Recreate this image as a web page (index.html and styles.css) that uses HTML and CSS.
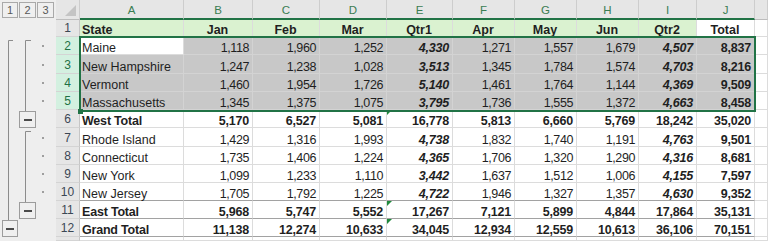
FILE: index.html
```html
<!DOCTYPE html>
<html>
<head>
<meta charset="utf-8">
<link rel="stylesheet" href="styles.css">
</head>
<body>
<div class="app">
  <div class="outline">
    <svg class="olines" width="56" height="241" viewBox="0 0 56 241">
      <path d="M13 40.5H8.5V220" />
      <path d="M31 40.5H25.5V111" />
      <path d="M31 131.5H25.5V202" />
    </svg>
    <div class="lvl r1 k1 first">1</div>
    <div class="lvl r1 k2">2</div>
    <div class="lvl r1 k3">3</div>
    <div class="dot r3 k3"></div>
    <div class="dot r4 k3"></div>
    <div class="dot r5 k3"></div>
    <div class="dot r6 k3"></div>
    <div class="mb r7 k2"><span class="dash"></span></div>
    <div class="dot r8 k3"></div>
    <div class="dot r9 k3"></div>
    <div class="dot r10 k3"></div>
    <div class="dot r11 k3"></div>
    <div class="mb r12 k2"><span class="dash"></span></div>
    <div class="mb r13 k1 first"><span class="dash"></span></div>
  </div>

  <div class="sheet">
    <div class="corner"><span class="tri"></span></div>
    <div class="ch sel">A</div><div class="ch sel">B</div><div class="ch sel">C</div><div class="ch sel">D</div><div class="ch sel">E</div><div class="ch sel">F</div><div class="ch sel">G</div><div class="ch sel">H</div><div class="ch sel">I</div><div class="ch sel">J</div><div class="ch"></div>

    <div class="rh">1</div>
    <div class="c hd l">State</div><div class="c hd">Jan</div><div class="c hd">Feb</div><div class="c hd">Mar</div><div class="c hd">Qtr1</div><div class="c hd">Apr</div><div class="c hd">May</div><div class="c hd">Jun</div><div class="c hd">Qtr2</div><div class="c hd w">Total</div><div class="c"></div>

    <div class="rh sel">2</div>
    <div class="c l act">Maine</div><div class="c n s">1,118</div><div class="c n s">1,960</div><div class="c n s">1,252</div><div class="c n s q">4,330</div><div class="c n s">1,271</div><div class="c n s">1,557</div><div class="c n s">1,679</div><div class="c n s q">4,507</div><div class="c n s b">8,837</div><div class="c"></div>

    <div class="rh sel">3</div>
    <div class="c l s">New Hampshire</div><div class="c n s">1,247</div><div class="c n s">1,238</div><div class="c n s">1,028</div><div class="c n s q">3,513</div><div class="c n s">1,345</div><div class="c n s">1,784</div><div class="c n s">1,574</div><div class="c n s q">4,703</div><div class="c n s b">8,216</div><div class="c"></div>

    <div class="rh sel">4</div>
    <div class="c l s">Vermont</div><div class="c n s">1,460</div><div class="c n s">1,954</div><div class="c n s">1,726</div><div class="c n s q">5,140</div><div class="c n s">1,461</div><div class="c n s">1,764</div><div class="c n s">1,144</div><div class="c n s q">4,369</div><div class="c n s b">9,509</div><div class="c"></div>

    <div class="rh sel">5</div>
    <div class="c l s">Massachusetts</div><div class="c n s">1,345</div><div class="c n s">1,375</div><div class="c n s">1,075</div><div class="c n s q">3,795</div><div class="c n s">1,736</div><div class="c n s">1,555</div><div class="c n s">1,372</div><div class="c n s q">4,663</div><div class="c n s b">8,458</div><div class="c"></div>

    <div class="rh">6</div>
    <div class="c l b">West Total</div><div class="c n b">5,170</div><div class="c n b">6,527</div><div class="c n b">5,081</div><div class="c n b err">16,778</div><div class="c n b">5,813</div><div class="c n b">6,660</div><div class="c n b">5,769</div><div class="c n b">18,242</div><div class="c n b">35,020</div><div class="c"></div>

    <div class="rh">7</div>
    <div class="c l">Rhode Island</div><div class="c n">1,429</div><div class="c n">1,316</div><div class="c n">1,993</div><div class="c n q">4,738</div><div class="c n">1,832</div><div class="c n">1,740</div><div class="c n">1,191</div><div class="c n q">4,763</div><div class="c n b">9,501</div><div class="c"></div>

    <div class="rh">8</div>
    <div class="c l">Connecticut</div><div class="c n">1,735</div><div class="c n">1,406</div><div class="c n">1,224</div><div class="c n q">4,365</div><div class="c n">1,706</div><div class="c n">1,320</div><div class="c n">1,290</div><div class="c n q">4,316</div><div class="c n b">8,681</div><div class="c"></div>

    <div class="rh">9</div>
    <div class="c l">New York</div><div class="c n">1,099</div><div class="c n">1,233</div><div class="c n">1,110</div><div class="c n q">3,442</div><div class="c n">1,637</div><div class="c n">1,512</div><div class="c n">1,006</div><div class="c n q">4,155</div><div class="c n b">7,597</div><div class="c"></div>

    <div class="rh">10</div>
    <div class="c l dk">New Jersey</div><div class="c n dk">1,705</div><div class="c n dk">1,792</div><div class="c n dk">1,225</div><div class="c n q dk">4,722</div><div class="c n dk">1,946</div><div class="c n dk">1,327</div><div class="c n dk">1,357</div><div class="c n q dk">4,630</div><div class="c n b dk">9,352</div><div class="c"></div>

    <div class="rh">11</div>
    <div class="c l b dk">East Total</div><div class="c n b dk">5,968</div><div class="c n b dk">5,747</div><div class="c n b dk">5,552</div><div class="c n b dk err">17,267</div><div class="c n b dk">7,121</div><div class="c n b dk">5,899</div><div class="c n b dk">4,844</div><div class="c n b dk">17,864</div><div class="c n b dk">35,131</div><div class="c"></div>

    <div class="rh">12</div>
    <div class="c l b dk">Grand Total</div><div class="c n b dk">11,138</div><div class="c n b dk">12,274</div><div class="c n b dk">10,633</div><div class="c n b dk err">34,045</div><div class="c n b dk">12,934</div><div class="c n b dk">12,559</div><div class="c n b dk">10,613</div><div class="c n b dk">36,106</div><div class="c n b dk">70,151</div><div class="c"></div>

    <div class="rh"></div>
    <div class="c"></div><div class="c"></div><div class="c"></div><div class="c"></div><div class="c"></div><div class="c"></div><div class="c"></div><div class="c"></div><div class="c"></div><div class="c"></div><div class="c"></div>

    <div class="selbox"><div class="handle"></div></div>
  </div>
</div>
</body>
</html>
```

FILE: styles.css
```css
* { box-sizing: border-box; }
html, body { margin: 0; padding: 0; }
body {
  width: 768px;
  height: 241px;
  overflow: hidden;
  background: #ffffff;
  font-family: "Liberation Sans", Arial, sans-serif;
  color: #1f1f1f;
}
.app {
  display: flex;
  height: 241px;
}

/* ---------- outline panel ---------- */
.outline {
  width: 56px;
  flex: none;
  position: relative;
  background: #eeeeee;
  display: grid;
  grid-template-columns: 18px 18px 20px;
  grid-template-rows: 20px 17px 18px 19px 18px 18px 18px 19px 18px 18px 18px 18px 18px 1fr;
}
.olines {
  position: absolute;
  left: 0;
  top: 0;
  fill: none;
  stroke: #8c8c8c;
  stroke-width: 1;
}
.r1 { grid-row: 1; } .r3 { grid-row: 3; } .r4 { grid-row: 4; } .r5 { grid-row: 5; }
.r6 { grid-row: 6; } .r7 { grid-row: 7; } .r8 { grid-row: 8; } .r9 { grid-row: 9; }
.r10 { grid-row: 10; } .r11 { grid-row: 11; } .r12 { grid-row: 12; } .r13 { grid-row: 13; }
.k1 { grid-column: 1; } .k2 { grid-column: 2; } .k3 { grid-column: 3; }

.lvl {
  margin: 2px 0 0 1px;
  width: 17px;
  height: 16px;
  border: 1px solid #a9a9a9;
  background: #efefef;
  color: #585858;
  font-size: 11px;
  display: flex;
  align-items: center;
  justify-content: center;
  position: relative;
}
.lvl.first { margin-left: 2px; width: 16px; }
.mb {
  margin: 1px 0 0 1px;
  width: 17px;
  height: 17px;
  border: 1px solid #9c9c9c;
  background: #efefef;
  display: flex;
  align-items: center;
  justify-content: center;
  position: relative;
}
.mb.first { margin-left: 2px; width: 16px; }
.dash {
  width: 8px;
  height: 2px;
  background: #4a4a4a;
}
.dot {
  width: 2px;
  height: 2px;
  background: #9e9e9e;
  align-self: center;
  margin-left: 6px;
}

/* ---------- sheet ---------- */
.sheet {
  flex: 1;
  position: relative;
  display: grid;
  grid-template-columns: 24px 104px 69px 67px 67px 66px 62px 62px 62px 58px 58px 1fr;
  grid-template-rows: 20px 17px 18px 19px 18px 18px 18px 19px 18px 18px 18px 18px 18px 1fr;
}
.corner {
  background: #e6e6e6;
  border-right: 1px solid #cdcdcd;
  border-bottom: 1px solid #bdbdbd;
  display: flex;
  justify-content: flex-end;
  align-items: flex-end;
  padding: 0 3px 3px 0;
}
.tri {
  width: 0;
  height: 0;
  border-left: 11px solid transparent;
  border-bottom: 11px solid #c4c4c4;
}
.ch {
  background: #e6e6e6;
  border-right: 1px solid #cdcdcd;
  border-bottom: 1px solid #bdbdbd;
  display: flex;
  align-items: center;
  justify-content: center;
  font-size: 11.5px;
  color: #606060;
  padding-top: 2px;
}
.ch.sel {
  color: #3a7d52;
  border-bottom: 2px solid #217346;
}
.rh {
  background: #e6e6e6;
  border-right: 1px solid #c6c6c6;
  border-bottom: 1px solid #d4d4d4;
  display: flex;
  justify-content: center;
  align-items: flex-end;
  font-size: 12px;
  line-height: 12px;
  color: #3b4754;
  padding-bottom: 2px;
}
.rh.sel {
  background: #d3f0e0;
  color: #1e7145;
}
.c {
  position: relative;
  border-right: 1px solid #dcdcdc;
  border-bottom: 1px solid #dcdcdc;
  display: flex;
  align-items: flex-end;
  justify-content: flex-end;
  padding: 0 3px 0 2px;
  font-size: 12.5px;
  line-height: 12px;
  white-space: nowrap;
}
.c.l { justify-content: flex-start; }
.hd {
  background: #daf2d0;
  font-weight: bold;
  justify-content: center;
}
.hd.w { background: #ffffff; }
.s {
  background: #c8c8c8;
  border-color: #d3d3d3;
}
.act { background: #ffffff; }
.n { letter-spacing: -0.4px; }
.b { font-weight: bold; letter-spacing: -0.2px; }
.q { font-weight: bold; font-style: italic; letter-spacing: -0.2px; }
.dk { border-bottom-color: #a2a2a2; }
.err::before {
  content: "";
  position: absolute;
  top: 0;
  left: 0;
  border-top: 5px solid #1f8a3c;
  border-right: 5px solid transparent;
}
.selbox {
  position: absolute;
  left: 23px;
  top: 36px;
  width: 677px;
  height: 76px;
  border: 2px solid #217346;
  pointer-events: none;
}
.handle {
  position: absolute;
  left: -3px;
  bottom: -4px;
  width: 5px;
  height: 5px;
  background: #217346;
}
```
